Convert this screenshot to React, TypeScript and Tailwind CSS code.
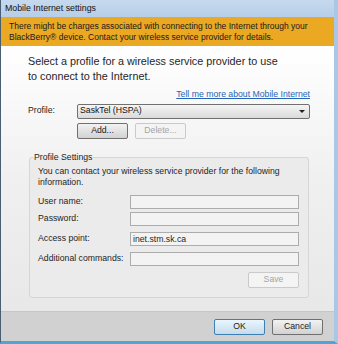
const font = { fontFamily: '"Liberation Sans", Arial, sans-serif' };

function Btn({ label, disabled, primary }: { label: string; disabled?: boolean; primary?: boolean }) {
  return (
    <div
      className={`w-[51px] h-[16px] rounded-[2px] border flex items-center justify-center text-[8.7px] leading-none ${
        disabled
          ? "border-[#cacaca] bg-[#f4f4f4] text-[#a4a4a4]"
          : primary
          ? "border-[#3c7fb1] bg-gradient-to-b from-[#eaf6fd] to-[#c4dcea] text-[#222]"
          : "border-[#707070] bg-gradient-to-b from-[#f2f2f2] to-[#d2d2d2] text-[#222]"
      }`}
    >
      {label}
    </div>
  );
}

function Field({ label, value, top }: { label: string; value?: string; top: string }) {
  return (
    <div className={`flex items-center h-[14px] ${top}`}>
      <div className="w-[92px] text-[8.7px] text-[#1e1e1e] whitespace-nowrap">{label}</div>
      <div className="w-[169px] h-[14px] border border-[#acacac] bg-[#f3f3f3] text-[8.7px] leading-[12px] pl-[2px] text-[#1e1e1e]">
        {value}
      </div>
    </div>
  );
}

export default function App() {
  return (
    <div style={font} className="w-[338px] h-[344px] flex flex-col overflow-hidden">
      <div className="flex-1 flex flex-col border-l border-l-[#4a5e72] border-r-[4px] border-r-[#a9c8e6] border-b-[3px] border-b-[#4fa6d6]">
        <div className="h-[17px] bg-gradient-to-b from-[#c6d9ee] to-[#b7cee8] text-[8.8px] text-[#111] pl-[4px] flex items-center">
          Mobile Internet settings
        </div>
        <div className="h-[29px] bg-[#eba823] text-[8.5px] leading-[11px] text-[#1a1a1a] pl-[8px] pt-[3.5px] whitespace-nowrap">
          There might be charges associated with connecting to the Internet through your
          <br />
          BlackBerry® device. Contact your wireless service provider for details.
        </div>
        <div className="flex-1 flex flex-col bg-gradient-to-b from-[#ffffff] via-[#f0f0f0] to-[#e8e8e8] pl-[27px] pr-[24px]">
          <div className="mt-[8px] text-[10.8px] leading-[15px] text-[#262626] whitespace-nowrap">
            Select a profile for a wireless service provider to use
            <br />
            to connect to the Internet.
          </div>
          <div className="flex justify-end mt-[5px] h-[11px] leading-[11px]">
            <span className="text-[8.7px] text-[#2565b8] underline">Tell me more about Mobile Internet</span>
          </div>
          <div className="flex items-center mt-[3.5px]">
            <div className="w-[49px] text-[8.7px] text-[#1e1e1e]">Profile:</div>
            <div className="w-[233px] h-[15px] border border-[#707070] rounded-[2px] bg-gradient-to-b from-[#f5f5f5] to-[#dadada] flex items-center justify-between px-[2px] text-[8.7px] text-[#111]">
              <span>SaskTel (HSPA)</span>
              <span className="w-0 h-0 border-l-[3px] border-r-[3px] border-t-[3px] border-l-transparent border-r-transparent border-t-[#222] mr-[2px]" />
            </div>
          </div>
          <div className="flex gap-[7px] ml-[49px] mt-[4px]">
            <Btn label="Add..." />
            <Btn label="Delete..." disabled />
          </div>
          <fieldset className="mt-[13px] ml-[1px] w-[280px] border border-[#d6d6d6] rounded-[3px] pl-[3px] pr-[9px] pb-[9px] pt-[3.5px] bg-[#ebebeb]">
            <legend className="px-[1px] text-[8.7px] leading-[11px] text-[#1e1e1e]">Profile Settings</legend>
            <div className="pl-[5px]">
              <div className="text-[8.7px] leading-[11px] text-[#1e1e1e] whitespace-nowrap">
                You can contact your wireless service provider for the following
                <br />
                information.
              </div>
              <Field label="User name:" top="mt-[6.5px]" />
              <Field label="Password:" top="mt-[3px]" />
              <Field label="Access point:" value="inet.stm.sk.ca" top="mt-[6px]" />
              <Field label="Additional commands:" top="mt-[6px]" />
              <div className="flex justify-end mt-[6px]">
                <Btn label="Save" disabled />
              </div>
            </div>
          </fieldset>
        </div>
        <div className="h-[30px] bg-[#d1d1d1] border-t border-[#c6c6c6] flex items-center justify-end gap-[7px] pr-[11px]">
          <Btn label="OK" primary />
          <Btn label="Cancel" />
        </div>
      </div>
    </div>
  );
}
